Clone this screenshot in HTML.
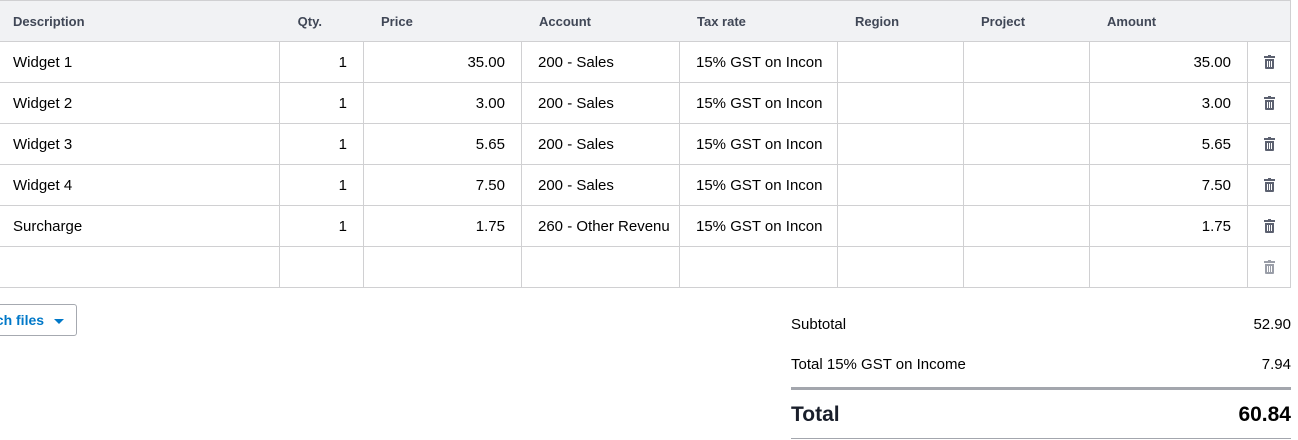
<!DOCTYPE html>
<html><head><meta charset="utf-8"><style>
*{box-sizing:border-box;margin:0;padding:0}
body{width:1298px;height:440px;overflow:hidden;background:#fff;font-family:"Liberation Sans",Arial,sans-serif;color:#000;position:relative}
.g{position:absolute;left:0;top:0;width:1291px;border-top:1px solid #d0d0d2;display:grid;grid-template-columns:280px 84px 158px 158px 158px 126px 126px 158px 43px}
.g div{height:41px;border-bottom:1px solid #d0d0d2;border-right:1px solid #d0d0d2;display:flex;align-items:center;font-size:15px;padding:0 16px 0 16px;white-space:nowrap;overflow:hidden}
.g div.h{background:#f1f2f4;border-right:none;font-size:13px;font-weight:bold;color:#404756;padding-left:17px}
.g div.h.last{border-right:1px solid #d0d0d2}
.g div.first{padding-left:13px}
.g div.r{justify-content:flex-end}
.g div.t{justify-content:center;padding:0}
.tr{display:block;width:11px;height:14px;position:relative}
.tr:before{content:"";position:absolute;left:0;top:1px;width:11px;height:2px;background:#5c6170}
.tr:after{content:"";position:absolute;left:1px;top:4px;width:9px;height:10px;background:#5c6170;border-radius:0 0 1px 1px}
.tr i{position:absolute;left:4px;top:0;width:3px;height:1px;background:#5c6170}
.tr b{position:absolute;top:6px;width:1px;height:6px;background:#fff;z-index:2}
.tr.l:before,.tr.l:after,.tr.l i{background:#9a9ea8}
.btn{position:absolute;left:-10px;top:304px;width:87px;height:32px;border:1px solid #a6a9b0;border-radius:3px;color:#0078c8;font-weight:bold;font-size:14px;line-height:30px}
.btn span{position:absolute;left:-3px}
.btn .ar{position:absolute;left:63px;top:14px;width:0;height:0;border-left:5px solid transparent;border-right:5px solid transparent;border-top:5px solid #0078c8}
.tot{position:absolute;left:791px;width:500px;font-size:15px}
.tot .v{position:absolute;right:0;top:0}
</style></head><body>
<div class="g">
<div class="h first">Description</div><div class="h r" style="padding-right:42px">Qty.</div><div class="h">Price</div><div class="h">Account</div><div class="h">Tax rate</div><div class="h">Region</div><div class="h">Project</div><div class="h">Amount</div><div class="h last"></div>

<div class="first">Widget 1</div><div class="r">1</div><div class="r">35.00</div><div>200 - Sales</div><div>15% GST on Incon</div><div></div><div></div><div class="r">35.00</div><div class="t"><span class="tr"><i></i><b style="left:3px"></b><b style="left:5px"></b><b style="left:7px"></b></span></div>
<div class="first">Widget 2</div><div class="r">1</div><div class="r">3.00</div><div>200 - Sales</div><div>15% GST on Incon</div><div></div><div></div><div class="r">3.00</div><div class="t"><span class="tr"><i></i><b style="left:3px"></b><b style="left:5px"></b><b style="left:7px"></b></span></div>
<div class="first">Widget 3</div><div class="r">1</div><div class="r">5.65</div><div>200 - Sales</div><div>15% GST on Incon</div><div></div><div></div><div class="r">5.65</div><div class="t"><span class="tr"><i></i><b style="left:3px"></b><b style="left:5px"></b><b style="left:7px"></b></span></div>
<div class="first">Widget 4</div><div class="r">1</div><div class="r">7.50</div><div>200 - Sales</div><div>15% GST on Incon</div><div></div><div></div><div class="r">7.50</div><div class="t"><span class="tr"><i></i><b style="left:3px"></b><b style="left:5px"></b><b style="left:7px"></b></span></div>
<div class="first">Surcharge</div><div class="r">1</div><div class="r">1.75</div><div>260 - Other Revenu</div><div>15% GST on Incon</div><div></div><div></div><div class="r">1.75</div><div class="t"><span class="tr"><i></i><b style="left:3px"></b><b style="left:5px"></b><b style="left:7px"></b></span></div>
<div></div><div></div><div></div><div></div><div></div><div></div><div></div><div></div><div class="t"><span class="tr l"><i></i><b style="left:3px"></b><b style="left:5px"></b><b style="left:7px"></b></span></div>
</div>

<div class="btn"><span>ach files</span><span class="ar"></span></div>

<div class="tot" style="top:316px">Subtotal<span class="v">52.90</span></div>
<div class="tot" style="top:356px">Total 15% GST on Income<span class="v">7.94</span></div>
<div style="position:absolute;left:791px;top:387px;width:500px;height:3px;background:#a3a6ad"></div>
<div class="tot" style="top:403px;font-size:21px;font-weight:bold;color:#1a1f2b">Total<span class="v" style="color:#000">60.84</span></div>
<div style="position:absolute;left:791px;top:438px;width:500px;height:1px;background:#a3a6ad"></div>
</body></html>
